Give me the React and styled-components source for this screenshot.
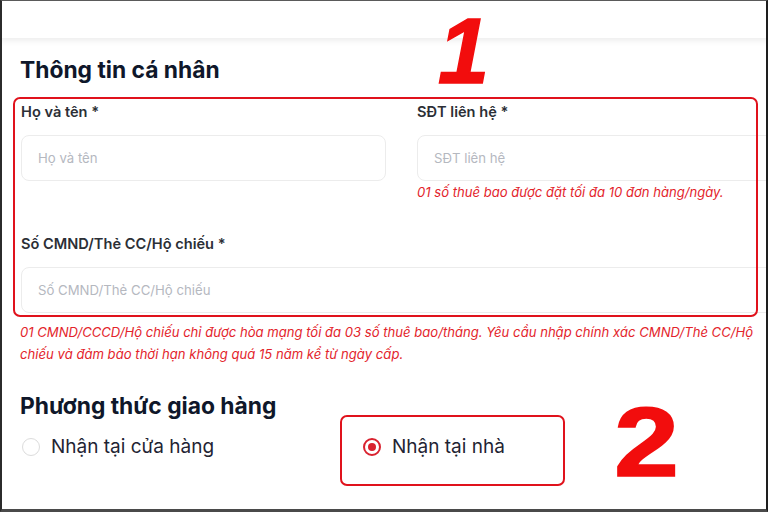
import React from "react";
import styled, { createGlobalStyle } from "styled-components";

const GlobalStyle = createGlobalStyle`
  html, body {
    margin: 0;
    padding: 0;
    background: #ffffff;
  }
  body {
    font-family: "Inter", "Noto Sans", sans-serif;
    color: #1d2433;
  }
  * {
    box-sizing: border-box;
  }
`;

const Frame = styled.div`
  position: relative;
  width: 768px;
  height: 512px;
  overflow: hidden;
  background: #ffffff;

  &::after {
    content: "";
    position: absolute;
    inset: 0;
    border-left: 2px solid #2b2b2b;
    border-top: 1px solid #5a5a5a;
    border-right: 2px solid #1e1e1e;
    border-bottom: 3px solid #4a4a4a;
    pointer-events: none;
  }
`;

const Header = styled.div`
  height: 38px;
  background: #ffffff;
  box-shadow: 0 3px 6px rgba(0, 0, 0, 0.07);
`;

const Content = styled.div`
  padding: 18px 0 0 20px;
`;

const SectionTitle = styled.h2`
  margin: 0;
  font-size: 22.8px;
  line-height: 28px;
  font-weight: 700;
  color: #0f172a;
  margin-top: ${(p) => p.$top || 0}px;
`;

const FormGrid = styled.div`
  margin: 18px 0 0 1px;
  display: grid;
  grid-template-columns: 365px 365px;
  column-gap: 31px;
  row-gap: 0;
`;

const Field = styled.div`
  display: flex;
  flex-direction: column;
  grid-column: ${(p) => (p.$wide ? "1 / span 2" : "auto")};
  margin-top: ${(p) => p.$top || 0}px;
`;

const Label = styled.label`
  font-size: 14.6px;
  line-height: 20px;
  font-weight: 600;
  color: #2c2f36;
`;

const Input = styled.input`
  margin-top: 13px;
  height: 46px;
  width: 100%;
  border: 1px solid #ececec;
  border-radius: 8px;
  padding: 0 16px;
  font-family: inherit;
  font-size: 13.2px;
  color: #333;
  outline: none;

  &::placeholder {
    color: #b5b8bf;
  }
`;

const Hint = styled.p`
  margin: 0;
  font-size: 13.1px;
  line-height: 20px;
  font-style: italic;
  color: #e3242b;
  padding-top: ${(p) => p.$top || 0}px;
`;

const LongHint = styled(Hint)`
  font-size: 13.1px;
  line-height: 22px;
  width: 745px;
  margin-top: 8px;
`;

const RadioGroup = styled.div`
  margin-top: 15px;
  display: grid;
  grid-template-columns: 341px auto;
  padding-left: 2px;
`;

const RadioOption = styled.label`
  display: flex;
  align-items: center;
  gap: 11px;
  font-size: 19px;
  line-height: 24px;
  color: #1f2433;
  cursor: pointer;
`;

const RadioCircle = styled.span`
  width: 18px;
  height: 18px;
  flex-shrink: 0;
  border-radius: 50%;
  border: ${(p) => (p.$checked ? "2px solid #d9222f" : "1.5px solid #dcdcdc")};
  display: flex;
  align-items: center;
  justify-content: center;

  &::after {
    content: "";
    width: 8px;
    height: 8px;
    border-radius: 50%;
    background: ${(p) => (p.$checked ? "#d9222f" : "transparent")};
  }
`;

const Highlight = styled.div`
  position: absolute;
  left: ${(p) => p.$x}px;
  top: ${(p) => p.$y}px;
  width: ${(p) => p.$w}px;
  height: ${(p) => p.$h}px;
  border: 2px solid #e0121c;
  border-radius: 7px;
  pointer-events: none;
`;

const StepNumber = styled.span`
  position: absolute;
  left: ${(p) => p.$x}px;
  top: ${(p) => p.$y}px;
  font-family: "Liberation Sans", Arial, sans-serif;
  font-weight: 700;
  font-style: ${(p) => (p.$italic ? "italic" : "normal")};
  font-size: ${(p) => p.$size}px;
  line-height: 1;
  color: #f20d0d;
  transform: scaleX(${(p) => p.$sx || 1});
  transform-origin: left top;
  -webkit-text-stroke: 1.5px #f20d0d;
  pointer-events: none;
`;

export default function App() {
  return (
    <>
      <GlobalStyle />
      <Frame>
        <Header />
        <Content>
          <SectionTitle>Thông tin cá nhân</SectionTitle>
          <FormGrid>
            <Field>
              <Label>Họ và tên *</Label>
              <Input placeholder="Họ và tên" />
            </Field>
            <Field>
              <Label>SĐT liên hệ *</Label>
              <Input placeholder="SĐT liên hệ" />
              <Hint $top={1}>01 số thuê bao được đặt tối đa 10 đơn hàng/ngày.</Hint>
            </Field>
            <Field $wide $top={32}>
              <Label>Số CMND/Thẻ CC/Hộ chiếu *</Label>
              <Input placeholder="Số CMND/Thẻ CC/Hộ chiếu" />
            </Field>
          </FormGrid>
          <LongHint>
            01 CMND/CCCD/Hộ chiếu chỉ được hòa mạng tối đa 03 số thuê bao/tháng. Yêu cầu nhập chính xác CMND/Thẻ CC/Hộ
            chiếu và đảm bảo thời hạn không quá 15 năm kể từ ngày cấp.
          </LongHint>
          <SectionTitle $top={27}>Phương thức giao hàng</SectionTitle>
          <RadioGroup>
            <RadioOption>
              <RadioCircle />
              Nhận tại cửa hàng
            </RadioOption>
            <RadioOption>
              <RadioCircle $checked />
              Nhận tại nhà
            </RadioOption>
          </RadioGroup>
        </Content>

        <Highlight $x={13} $y={97} $w={745} $h={220} />
        <Highlight $x={340} $y={415} $w={225} $h={71} />
        <StepNumber $x={438} $y={5} $size={92} $italic>1</StepNumber>
        <StepNumber $x={614} $y={392} $size={99} $sx={1.18}>2</StepNumber>
      </Frame>
    </>
  );
}
